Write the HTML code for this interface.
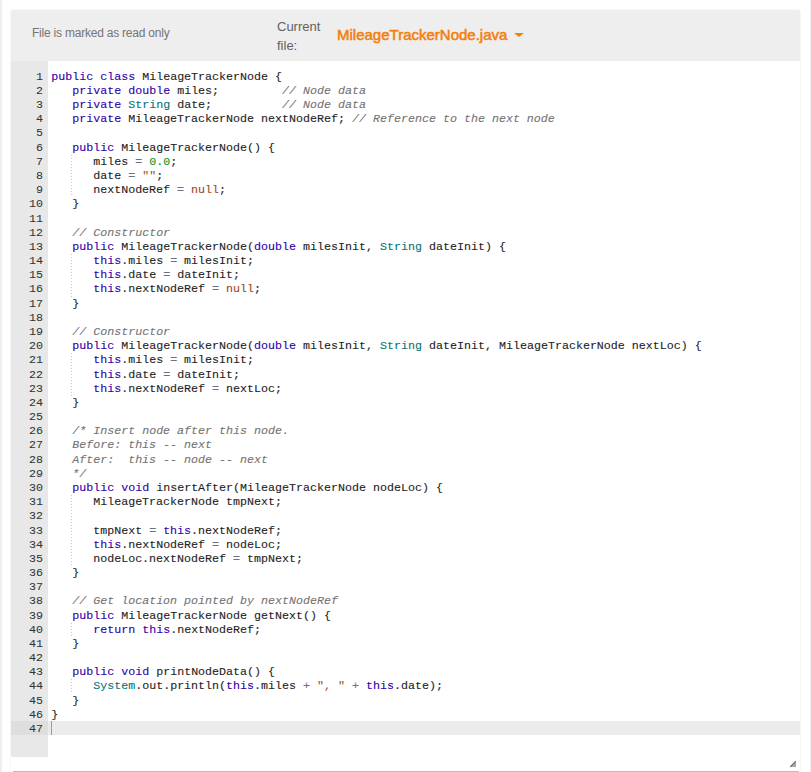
<!DOCTYPE html>
<html><head><meta charset="utf-8">
<style>
html,body{margin:0;padding:0;width:811px;height:772px;overflow:hidden;background:#fff;position:relative;}
.lstrip{position:absolute;left:0;top:0;width:2px;height:772px;background:#efefef;}
.rstrip{position:absolute;left:810px;top:0;width:1px;height:772px;background:#f0f0f0;}
.panel{position:absolute;left:11px;top:10px;width:789px;height:780px;background:#fff;border-radius:2px;box-shadow:0 0 2px rgba(0,0,0,0.12);}
.hdr{position:absolute;left:11px;top:10px;width:789px;height:51px;background:#eeeeee;border-radius:2px 2px 0 0;}
.ro{position:absolute;left:32px;top:25px;font:12px/16px "Liberation Sans",sans-serif;color:#757575;letter-spacing:-0.22px;white-space:nowrap;}
.cur{position:absolute;left:277px;top:17px;font:13px/19px "Liberation Sans",sans-serif;color:#616161;white-space:nowrap;}
.fname{position:absolute;left:337px;top:26px;font:15px/18px "Liberation Sans",sans-serif;color:#f57f0a;-webkit-text-stroke:0.55px #f57f0a;white-space:nowrap;}
.caret{position:absolute;left:513.5px;top:33px;width:0;height:0;border-left:5px solid transparent;border-right:5px solid transparent;border-top:4.5px solid #f57f0a;}
.gutter{position:absolute;left:11px;top:61px;width:37px;height:696px;background:#e8e8e8;}
.ln{position:absolute;left:12px;width:788px;height:14.18px;font:11.667px/14.18px "Liberation Mono",monospace;letter-spacing:0px;white-space:pre;color:#1e1e1e;-webkit-text-stroke:0.1px currentColor;}
.ln .g{position:absolute;left:0;width:31px;text-align:right;color:#333;-webkit-text-stroke:0.05px currentColor;}
.ln .cd{position:absolute;left:39.2px;}
.actbg{position:absolute;left:48px;top:721px;width:752px;height:14px;background:#ebebeb;}
.actg{position:absolute;left:11px;width:37px;top:721px;height:14px;background:#dedede;}
.act{height:14px;top:721px !important;}
.guide{position:absolute;left:71px;width:1px;background-image:linear-gradient(#c8c8c8 50%,transparent 50%);background-size:1px 3px;}
.k{color:#2d00a8;}
.t{color:#00767a;}
.n{color:#17901a;}
.a{color:#9a4a1c;}
.s{color:#a0561e;}
.c{color:#747474;font-style:italic;}
.o{color:#6a7088;}
.cursor{position:absolute;left:51px;top:721px;width:1px;height:14px;background:#9a9a9a;}
.bline{position:absolute;left:13px;top:771px;width:786px;height:1px;background:#bbb;}
.grip{position:absolute;left:788.6px;top:760px;}
</style></head><body>
<div class="lstrip"></div>
<div class="rstrip"></div>
<div class="panel"></div>
<div class="hdr"></div>
<div class="ro">File is marked as read only</div>
<div class="cur">Current<br>file:</div>
<div class="fname">MileageTrackerNode.java</div>
<div class="caret"></div>
<div class="gutter"></div>
<div class="actbg"></div>
<div class="actg"></div>
<div class="ln" style="top:70px"><span class="g">1</span><span class="cd"><span class="k">public</span> <span class="k">class</span> MileageTrackerNode {</span></div>
<div class="ln" style="top:84px"><span class="g">2</span><span class="cd">   <span class="k">private</span> <span class="k">double</span> miles;         <span class="c">// Node data</span></span></div>
<div class="ln" style="top:98px"><span class="g">3</span><span class="cd">   <span class="k">private</span> <span class="t">String</span> date;          <span class="c">// Node data</span></span></div>
<div class="ln" style="top:112px"><span class="g">4</span><span class="cd">   <span class="k">private</span> MileageTrackerNode nextNodeRef; <span class="c">// Reference to the next node</span></span></div>
<div class="ln" style="top:126px"><span class="g">5</span><span class="cd"></span></div>
<div class="ln" style="top:141px"><span class="g">6</span><span class="cd">   <span class="k">public</span> MileageTrackerNode() {</span></div>
<div class="ln" style="top:155px"><span class="g">7</span><span class="cd">      miles <span class="o">=</span> <span class="n">0.0</span>;</span></div>
<div class="ln" style="top:169px"><span class="g">8</span><span class="cd">      date <span class="o">=</span> <span class="s">&quot;&quot;</span>;</span></div>
<div class="ln" style="top:183px"><span class="g">9</span><span class="cd">      nextNodeRef <span class="o">=</span> <span class="a">null</span>;</span></div>
<div class="ln" style="top:197px"><span class="g">10</span><span class="cd">   }</span></div>
<div class="ln" style="top:212px"><span class="g">11</span><span class="cd"></span></div>
<div class="ln" style="top:226px"><span class="g">12</span><span class="cd">   <span class="c">// Constructor</span></span></div>
<div class="ln" style="top:240px"><span class="g">13</span><span class="cd">   <span class="k">public</span> MileageTrackerNode(<span class="k">double</span> milesInit, <span class="t">String</span> dateInit) {</span></div>
<div class="ln" style="top:254px"><span class="g">14</span><span class="cd">      <span class="k">this</span>.miles <span class="o">=</span> milesInit;</span></div>
<div class="ln" style="top:268px"><span class="g">15</span><span class="cd">      <span class="k">this</span>.date <span class="o">=</span> dateInit;</span></div>
<div class="ln" style="top:282px"><span class="g">16</span><span class="cd">      <span class="k">this</span>.nextNodeRef <span class="o">=</span> <span class="a">null</span>;</span></div>
<div class="ln" style="top:297px"><span class="g">17</span><span class="cd">   }</span></div>
<div class="ln" style="top:311px"><span class="g">18</span><span class="cd"></span></div>
<div class="ln" style="top:325px"><span class="g">19</span><span class="cd">   <span class="c">// Constructor</span></span></div>
<div class="ln" style="top:339px"><span class="g">20</span><span class="cd">   <span class="k">public</span> MileageTrackerNode(<span class="k">double</span> milesInit, <span class="t">String</span> dateInit, MileageTrackerNode nextLoc) {</span></div>
<div class="ln" style="top:353px"><span class="g">21</span><span class="cd">      <span class="k">this</span>.miles <span class="o">=</span> milesInit;</span></div>
<div class="ln" style="top:368px"><span class="g">22</span><span class="cd">      <span class="k">this</span>.date <span class="o">=</span> dateInit;</span></div>
<div class="ln" style="top:382px"><span class="g">23</span><span class="cd">      <span class="k">this</span>.nextNodeRef <span class="o">=</span> nextLoc;</span></div>
<div class="ln" style="top:396px"><span class="g">24</span><span class="cd">   }</span></div>
<div class="ln" style="top:410px"><span class="g">25</span><span class="cd"></span></div>
<div class="ln" style="top:424px"><span class="g">26</span><span class="cd">   <span class="c">/* Insert node after this node.</span></span></div>
<div class="ln" style="top:438px"><span class="g">27</span><span class="cd"><span class="c">   Before: this -- next</span></span></div>
<div class="ln" style="top:453px"><span class="g">28</span><span class="cd"><span class="c">   After:  this -- node -- next</span></span></div>
<div class="ln" style="top:467px"><span class="g">29</span><span class="cd"><span class="c">   */</span></span></div>
<div class="ln" style="top:481px"><span class="g">30</span><span class="cd">   <span class="k">public</span> <span class="k">void</span> insertAfter(MileageTrackerNode nodeLoc) {</span></div>
<div class="ln" style="top:495px"><span class="g">31</span><span class="cd">      MileageTrackerNode tmpNext;</span></div>
<div class="ln" style="top:509px"><span class="g">32</span><span class="cd"></span></div>
<div class="ln" style="top:524px"><span class="g">33</span><span class="cd">      tmpNext <span class="o">=</span> <span class="k">this</span>.nextNodeRef;</span></div>
<div class="ln" style="top:538px"><span class="g">34</span><span class="cd">      <span class="k">this</span>.nextNodeRef <span class="o">=</span> nodeLoc;</span></div>
<div class="ln" style="top:552px"><span class="g">35</span><span class="cd">      nodeLoc.nextNodeRef <span class="o">=</span> tmpNext;</span></div>
<div class="ln" style="top:566px"><span class="g">36</span><span class="cd">   }</span></div>
<div class="ln" style="top:580px"><span class="g">37</span><span class="cd"></span></div>
<div class="ln" style="top:594px"><span class="g">38</span><span class="cd">   <span class="c">// Get location pointed by nextNodeRef</span></span></div>
<div class="ln" style="top:609px"><span class="g">39</span><span class="cd">   <span class="k">public</span> MileageTrackerNode getNext() {</span></div>
<div class="ln" style="top:623px"><span class="g">40</span><span class="cd">      <span class="k">return</span> <span class="k">this</span>.nextNodeRef;</span></div>
<div class="ln" style="top:637px"><span class="g">41</span><span class="cd">   }</span></div>
<div class="ln" style="top:651px"><span class="g">42</span><span class="cd"></span></div>
<div class="ln" style="top:665px"><span class="g">43</span><span class="cd">   <span class="k">public</span> <span class="k">void</span> printNodeData() {</span></div>
<div class="ln" style="top:679px"><span class="g">44</span><span class="cd">      <span class="t">System</span>.out.println(<span class="k">this</span>.miles <span class="o">+</span> <span class="s">&quot;, &quot;</span> <span class="o">+</span> <span class="k">this</span>.date);</span></div>
<div class="ln" style="top:694px"><span class="g">45</span><span class="cd">   }</span></div>
<div class="ln" style="top:708px"><span class="g">46</span><span class="cd">}</span></div>
<div class="ln" style="top:722px"><span class="g">47</span><span class="cd"></span></div>
<div class="guide" style="top:155.00px;height:42.00px"></div>
<div class="guide" style="top:254.00px;height:43.00px"></div>
<div class="guide" style="top:353.00px;height:43.00px"></div>
<div class="guide" style="top:495.00px;height:71.00px"></div>
<div class="guide" style="top:623.00px;height:14.00px"></div>
<div class="guide" style="top:679.00px;height:15.00px"></div>
<div class="cursor"></div>
<div class="bline"></div>
<svg class="grip" width="8" height="8" viewBox="0 0 8 8"><polygon points="1,7 7,1 7,7" fill="#a8a8a8"/><path d="M1.2 6.8 L6.8 1.2" stroke="#6a6a6a" stroke-width="1.1"/></svg>
</body></html>
